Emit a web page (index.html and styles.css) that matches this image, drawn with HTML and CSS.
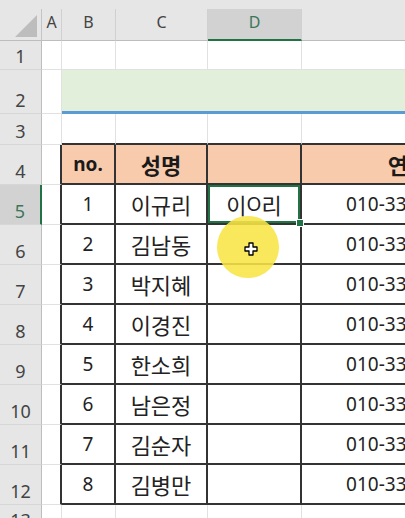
FILE: index.html
```html
<!DOCTYPE html>
<html lang="ko">
<head>
<meta charset="utf-8">
<title>Sheet</title>
<link rel="stylesheet" href="styles.css">
</head>
<body>
<div class="sheet">
  <div class="hdr">
    <div class="corner"><svg class="tri" width="42" height="32" viewBox="0 0 42 32"><polygon points="15,28 37,28 37,6" fill="#bdbdbd"/></svg></div>
    <div class="ch w-a">A</div>
    <div class="ch w-b">B</div>
    <div class="ch w-c">C</div>
    <div class="ch w-d sel">D</div>
    <div class="ch w-e"></div>
  </div>

  <div class="row h29">
    <div class="rh">1</div>
    <div class="cell w-a"></div><div class="cell w-b"></div><div class="cell w-c"></div><div class="cell w-d"></div><div class="cell w-e"></div>
  </div>

  <div class="row h44">
    <div class="rh">2</div>
    <div class="cell w-a"></div><div class="band"></div>
  </div>

  <div class="row h31">
    <div class="rh">3</div>
    <div class="cell w-a"></div><div class="cell w-b tt"></div><div class="cell w-c tt"></div><div class="cell w-d tt"></div><div class="cell w-e tt"></div>
  </div>

  <div class="row h40">
    <div class="rh">4</div>
    <div class="cell w-a tl"></div><div class="cell w-b t th">no.</div><div class="cell w-c t th"><span class="ko">성명</span></div><div class="cell w-d t th"></div><div class="cell w-e t th th-e"><span class="ko">연락처</span></div>
  </div>

  <div class="row h40">
    <div class="rh sel">5</div>
    <div class="cell w-a tl"></div><div class="cell w-b t">1</div><div class="cell w-c t"><span class="ko">이규리</span></div><div class="cell w-d t active"><span class="ko">이</span>O<span class="ko">리</span><span class="handle"></span></div><div class="cell w-e t">010-3345-1234</div>
  </div>

  <div class="row h40">
    <div class="rh">6</div>
    <div class="cell w-a tl"></div><div class="cell w-b t">2</div><div class="cell w-c t"><span class="ko">김남동</span></div><div class="cell w-d t"></div><div class="cell w-e t">010-3356-2234</div>
  </div>

  <div class="row h40">
    <div class="rh">7</div>
    <div class="cell w-a tl"></div><div class="cell w-b t">3</div><div class="cell w-c t"><span class="ko">박지혜</span></div><div class="cell w-d t"></div><div class="cell w-e t">010-3367-3234</div>
  </div>

  <div class="row h40">
    <div class="rh">8</div>
    <div class="cell w-a tl"></div><div class="cell w-b t">4</div><div class="cell w-c t"><span class="ko">이경진</span></div><div class="cell w-d t"></div><div class="cell w-e t">010-3378-4234</div>
  </div>

  <div class="row h40">
    <div class="rh">9</div>
    <div class="cell w-a tl"></div><div class="cell w-b t">5</div><div class="cell w-c t"><span class="ko">한소희</span></div><div class="cell w-d t"></div><div class="cell w-e t">010-3389-5234</div>
  </div>

  <div class="row h40">
    <div class="rh">10</div>
    <div class="cell w-a tl"></div><div class="cell w-b t">6</div><div class="cell w-c t"><span class="ko">남은정</span></div><div class="cell w-d t"></div><div class="cell w-e t">010-3390-6234</div>
  </div>

  <div class="row h40">
    <div class="rh">11</div>
    <div class="cell w-a tl"></div><div class="cell w-b t">7</div><div class="cell w-c t"><span class="ko">김순자</span></div><div class="cell w-d t"></div><div class="cell w-e t">010-3301-7234</div>
  </div>

  <div class="row h40">
    <div class="rh">12</div>
    <div class="cell w-a tl"></div><div class="cell w-b t">8</div><div class="cell w-c t"><span class="ko">김병만</span></div><div class="cell w-d t"></div><div class="cell w-e t">010-3312-8234</div>
  </div>

  <div class="row h29">
    <div class="rh">13</div>
    <div class="cell w-a"></div><div class="cell w-b"></div><div class="cell w-c"></div><div class="cell w-d"></div><div class="cell w-e"></div>
  </div>

  <div class="spot"></div>
  <svg class="cursor" width="14" height="14" viewBox="0 0 14 14"><path d="M5 1h4v4h4v4h-4v4h-4v-4h-4v-4h4z" fill="#fff" stroke="#000" stroke-width="1.3" stroke-linejoin="round"/></svg>
</div>
</body>
</html>
```

FILE: styles.css
```css
* { box-sizing: border-box; }
html, body { margin: 0; padding: 0; }
body {
  width: 405px;
  height: 518px;
  overflow: hidden;
  background: #fff;
  font-family: "Noto Sans", "Noto Sans CJK KR", sans-serif;
}
.sheet { position: relative; width: 524px; }

.w-a { width: 20px; }
.w-b { width: 54px; }
.w-c { width: 92px; }
.w-d { width: 94px; }
.w-e { width: 222px; }

.hdr {
  display: flex;
  align-items: flex-end;
  height: 41px;
  background: #e6e6e6;
}
.corner {
  flex: none;
  width: 42px;
  height: 32px;
  border-right: 1px solid #c4c4c4;
  border-bottom: 1px solid #bdbdbd;
}
.tri { display: block; }
.ch {
  flex: none;
  height: 32px;
  display: flex;
  justify-content: center;
  align-items: flex-end;
  padding-bottom: 10px;
  font-size: 16px;
  line-height: 16px;
  color: #444;
  border-right: 1px solid #d0d0d0;
  border-bottom: 1px solid #bdbdbd;
}
.ch.sel {
  background: #d2d2d2;
  color: #3d7558;
  border-bottom: 2px solid #217346;
  padding-bottom: 9px;
}

.row { display: flex; }
.h29 { height: 29px; }
.h31 { height: 31px; }
.h40 { height: 40px; }
.h44 { height: 44px; }

.rh {
  flex: none;
  width: 42px;
  display: flex;
  justify-content: center;
  align-items: flex-end;
  padding-bottom: 4px;
  background: #e6e6e6;
  border-right: 1px solid #bdbdbd;
  border-bottom: 1px solid #d6d6d6;
  font-size: 18px;
  line-height: 18px;
  color: #444;
}
.rh.sel {
  background: #d2d2d2;
  color: #3d7558;
  border-right: 2px solid #217346;
}

.cell {
  flex: none;
  display: flex;
  align-items: center;
  justify-content: center;
  border-right: 1px solid #e1e1e1;
  border-bottom: 1px solid #e1e1e1;
  font-size: 19px;
  line-height: 24px;
  color: #222;
  white-space: nowrap;
}
.ko {
  font-family: "Noto Sans CJK KR", sans-serif;
  font-size: 22px;
  line-height: 24px;
}
.band {
  flex: none;
  width: 462px;
  background: #e2efda;
  border-bottom: 3px solid #5b9bd5;
}
.cell.tt { border-bottom: 2px solid #333; }
.cell.tl { border-right: 2px solid #333; }
.cell.t {
  border-right: 2px solid #333;
  border-bottom: 2px solid #333;
}
.cell.th {
  background: #f8cbad;
  font-weight: 700;
  color: #1a1a1a;
}
.cell.th-e { padding-left: 12px; }
.cell.active { position: relative; }
.cell.active::after {
  content: "";
  position: absolute;
  left: 0; top: 0; right: 0; bottom: 0;
  border: 2px solid #217346;
}
.handle {
  position: absolute;
  right: -3px;
  bottom: -3px;
  width: 6px;
  height: 6px;
  background: #217346;
  box-shadow: 0 0 0 1px #fff;
  z-index: 2;
}

.spot {
  position: absolute;
  left: 217px;
  top: 216px;
  width: 62px;
  height: 62px;
  border-radius: 50%;
  background: rgba(248, 228, 70, 0.88);
}
.cursor {
  position: absolute;
  left: 244px;
  top: 242px;
}
```
